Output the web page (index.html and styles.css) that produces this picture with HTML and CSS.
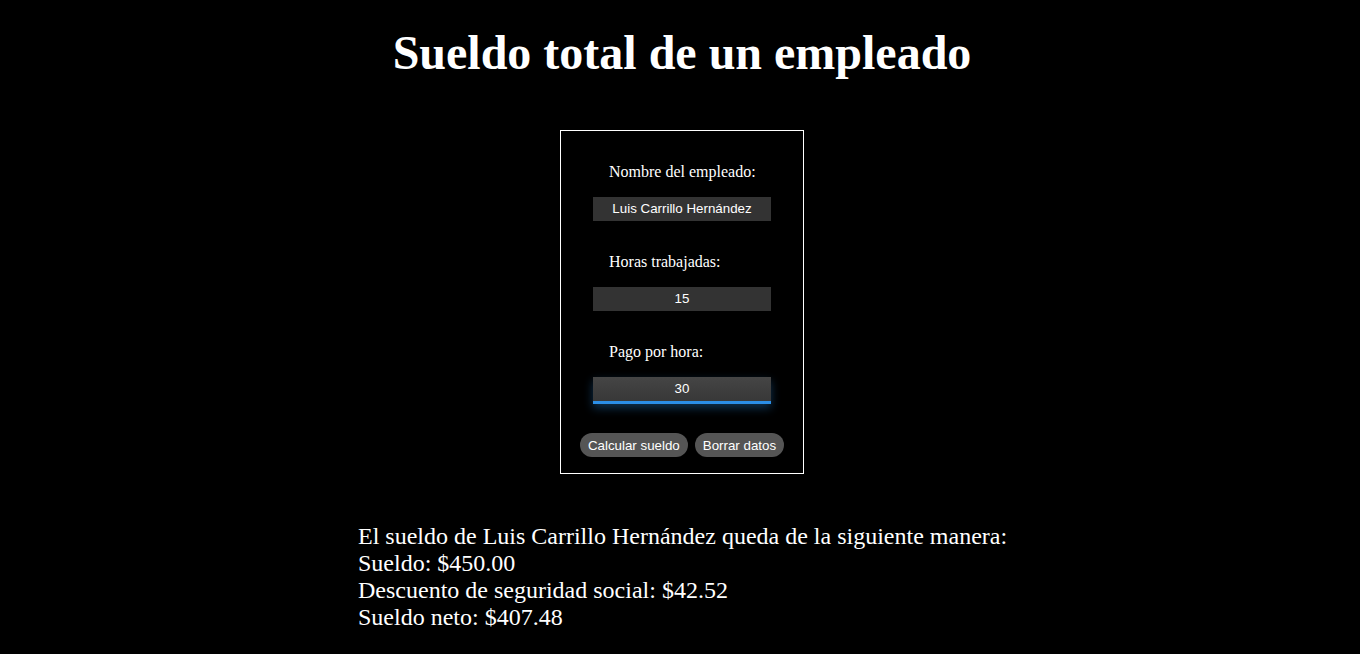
FILE: index.html
```html
<!DOCTYPE html>
<html lang="es">
<head>
<meta charset="utf-8">
<title>Sueldo total de un empleado</title>
<link rel="stylesheet" href="styles.css">
</head>
<body>
<h1 class="title">Sueldo total de un empleado</h1>
<form class="card">
  <label class="label" for="nombre">Nombre del empleado:</label>
  <input class="field" id="nombre" type="text" value="Luis Carrillo Hernández">
  <label class="label" for="horas">Horas trabajadas:</label>
  <input class="field" id="horas" type="text" value="15">
  <label class="label" for="pago">Pago por hora:</label>
  <input class="field field-focus" id="pago" type="text" value="30">
  <div class="actions">
    <button class="btn" type="button">Calcular sueldo</button>
    <button class="btn" type="button">Borrar datos</button>
  </div>
</form>
<div class="result">
  <div>El sueldo de Luis Carrillo Hernández queda de la siguiente manera:</div>
  <div>Sueldo: $450.00</div>
  <div>Descuento de seguridad social: $42.52</div>
  <div>Sueldo neto: $407.48</div>
</div>
</body>
</html>
```
FILE: styles.css
```css
html, body {
  background: #000;
}
body {
  margin: 0;
  padding: 8px 8px 8px 12px;
  color: #fff;
  font-family: "Liberation Serif", "Times New Roman", serif;
}
.title {
  margin: 17px 0 0;
  text-align: center;
  font-size: 48px;
  line-height: 56px;
  font-weight: bold;
}
.card {
  width: 242px;
  margin: 49px auto 0;
  border: 1px solid #fff;
  display: flex;
  flex-direction: column;
  align-items: center;
  padding: 32px 0 16px;
  box-sizing: content-box;
}
.label {
  align-self: flex-start;
  margin-left: 48px;
  font-size: 16px;
  line-height: 18px;
}
.field {
  width: 178px;
  height: 24px;
  box-sizing: border-box;
  margin: 16px 0 32px;
  border: 0;
  background: #333;
  color: #fff;
  text-align: center;
  font-family: "Liberation Sans", Arial, sans-serif;
  font-size: 13.33px;
  padding: 0 0 1px;
  outline: none;
}
.field-focus {
  height: 27px;
  background: linear-gradient(#454545, #383838);
  border-bottom: 3px solid #2b8ee6;
  box-shadow: 0 4px 10px rgba(43, 142, 230, 0.35);
  margin-bottom: 29px;
}
.actions {
  display: flex;
  gap: 7px;
}
.btn {
  height: 24px;
  padding: 0 8px;
  border: 0;
  border-radius: 12px;
  background: #555;
  color: #fff;
  font-family: "Liberation Sans", Arial, sans-serif;
  font-size: 13.33px;
}
.result {
  margin: 49px 0 0 346px;
  font-size: 24px;
  line-height: 27px;
}
```
